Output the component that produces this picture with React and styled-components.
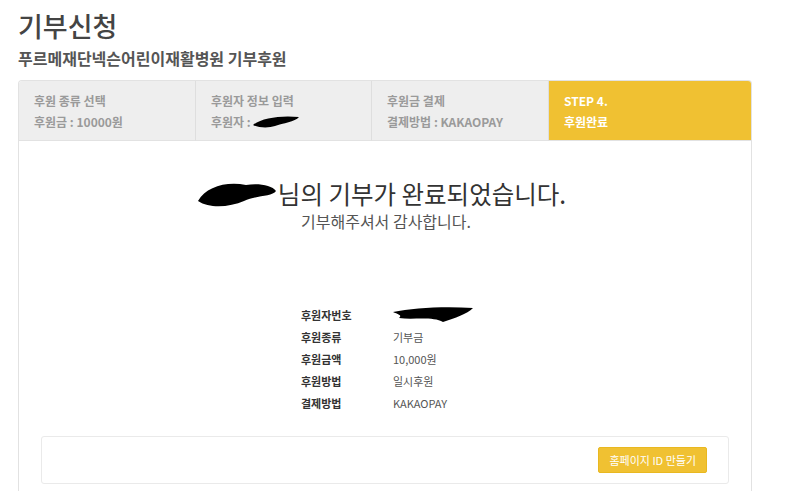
import React from 'react'
import styled, { createGlobalStyle } from 'styled-components'

const GlobalStyle = createGlobalStyle`
    body {
        margin: 0;
        background: #fff;
        font-family: "Noto Sans CJK KR", "Noto Sans", sans-serif;
    }
`

const Page = styled.div`
    width: 800px;
    height: 491px;
    overflow: hidden;
    padding: 7px 48px 0 18px;
    box-sizing: border-box;
`

const Title = styled.h1`
    margin: 0;
    font-size: 27px;
    font-weight: 500;
    color: #444;
    line-height: 38px;
`

const SubTitle = styled.h2`
    margin: 2px 0 11px;
    font-size: 16px;
    font-weight: 700;
    color: #555;
    line-height: 22px;
`

const Steps = styled.div`
    display: grid;
    grid-template-columns: 176px 176px 177px 1fr;
    height: 60px;
    border: 1px solid #e2e2e2;
    border-bottom: none;
    border-radius: 4px 4px 0 0;
    overflow: hidden;
`

const Step = styled.div`
    display: flex;
    flex-direction: column;
    justify-content: center;
    gap: 4px;
    padding: 0 15px;
    font-size: 12px;
    font-weight: 700;
    line-height: 17px;
    background: ${p => (p.active ? '#f0c132' : '#eee')};
    color: ${p => (p.active ? '#fff' : '#9a9a9a')};
    border-left: ${p => (p.first ? 'none' : '1px solid #dedede')};
    border-bottom: 1px solid #e2e2e2;
`

const Panel = styled.div`
    border: 1px solid #e2e2e2;
    border-top: none;
    padding: 35px 22px 20px;
    height: 400px;
    box-sizing: border-box;
`

const Done = styled.div`
    font-size: 24.5px;
    font-weight: 400;
    color: #333;
    line-height: 36px;
    display: flex;
    justify-content: center;
    align-items: center;
    margin: 0 8px 0 0;
`

const Thanks = styled.div`
    text-align: center;
    font-size: 16px;
    color: #555;
    line-height: 18px;
    margin-left: 2px;
`

const Details = styled.div`
    display: grid;
    grid-template-columns: 92px auto;
    row-gap: 4px;
    width: 200px;
    margin: 76px 0 0 260px;
    font-size: 11px;
    line-height: 18px;
`

const Label = styled.div`
    font-weight: 700;
    color: #333;
`

const Value = styled.div`
    color: #555;
`

const Footer = styled.div`
    margin-top: 24px;
    border: 1px solid #eaeaea;
    border-radius: 3px;
    height: 46px;
    display: flex;
    justify-content: flex-end;
    align-items: center;
    padding-right: 21px;
`

const Button = styled.button`
    background: #f0c132;
    border: 1px solid #e9b820;
    border-radius: 2px;
    color: #fff;
    font-family: inherit;
    font-size: 11px;
    height: 26px;
    padding: 0 10px;
`

const Scribble = ({ w, h, d }) => (
    <svg width={w} height={h} viewBox={`0 0 ${w} ${h}`}>
        <path d={d} fill="#000" />
    </svg>
)

const App = () => {
    const rows = [
        ['후원자번호', null],
        ['후원종류', '기부금'],
        ['후원금액', '10,000원'],
        ['후원방법', '일시후원'],
        ['결제방법', 'KAKAOPAY'],
    ]
    return (
        <Page>
            <GlobalStyle />
            <Title>기부신청</Title>
            <SubTitle>푸르메재단넥슨어린이재활병원 기부후원</SubTitle>
            <Steps>
                <Step first>
                    <span>후원 종류 선택</span>
                    <span>후원금 : 10000원</span>
                </Step>
                <Step>
                    <span>후원자 정보 입력</span>
                    <span style={{ display: 'flex', alignItems: 'center' }}>
                        후원자 :
                        <Scribble w={50} h={14} d="M2 11 C10 4 30 1 48 3 C44 8 32 9 24 12 C18 14 8 14 2 11 Z" />
                    </span>
                </Step>
                <Step>
                    <span>후원금 결제</span>
                    <span>결제방법 : KAKAOPAY</span>
                </Step>
                <Step active>
                    <span>STEP 4.</span>
                    <span>후원완료</span>
                </Step>
            </Steps>
            <Panel>
                <Done>
                    <Scribble w={82} h={30} d="M2 22 C10 8 30 2 50 6 C62 4 76 6 80 12 C76 18 60 16 48 22 C34 28 14 30 2 22 Z" />
                    님의 기부가 완료되었습니다.
                </Done>
                <Thanks>기부해주셔서 감사합니다.</Thanks>
                <Details>
                    {rows.map(([k, v]) => (
                        <React.Fragment key={k}>
                            <Label>{k}</Label>
                            {v ? (
                                <Value>{v}</Value>
                            ) : (
                                <Scribble w={82} h={18} d="M0 6 C20 2 50 0 80 2 C74 8 62 12 50 16 C40 10 20 14 6 12 C10 9 4 8 0 6 Z" />
                            )}
                        </React.Fragment>
                    ))}
                </Details>
                <Footer>
                    <Button>홈페이지 ID 만들기</Button>
                </Footer>
            </Panel>
        </Page>
    )
}

export default App
